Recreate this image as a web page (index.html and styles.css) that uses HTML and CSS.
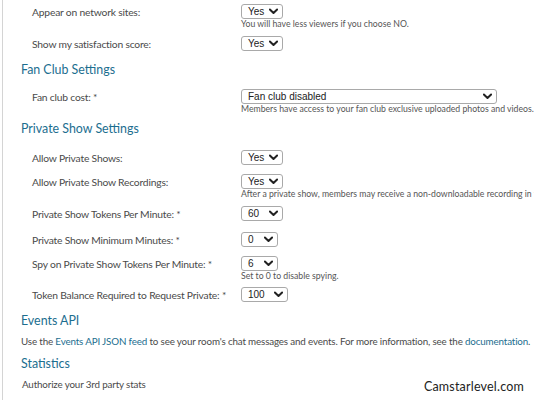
FILE: index.html
```html
<!DOCTYPE html>
<html>
<head>
<meta charset="utf-8">
<link rel="stylesheet" href="styles.css">
</head>
<body>
<div class="page">
  <div class="row r1">
    <div class="label">Appear on network sites:</div>
    <div class="ctl">
      <div class="sel w41"><span>Yes</span><svg class="chev" viewBox="0 0 10 7"><path d="M1 1.2 L5 5.2 L9 1.2"/></svg></div>
      <div class="help">You will have less viewers if you choose NO.</div>
    </div>
  </div>
  <div class="row r2">
    <div class="label">Show my satisfaction score:</div>
    <div class="ctl">
      <div class="sel w41"><span>Yes</span><svg class="chev" viewBox="0 0 10 7"><path d="M1 1.2 L5 5.2 L9 1.2"/></svg></div>
    </div>
  </div>

  <h2 class="h h-fan">Fan Club Settings</h2>
  <div class="row r-fan">
    <div class="label">Fan club cost: *</div>
    <div class="ctl">
      <div class="sel wide"><span>Fan club disabled</span><svg class="chev" viewBox="0 0 10 7"><path d="M1 1.2 L5 5.2 L9 1.2"/></svg></div>
      <div class="help">Members have access to your fan club exclusive uploaded photos and videos.</div>
    </div>
  </div>

  <h2 class="h h-priv">Private Show Settings</h2>
  <div class="row r-a">
    <div class="label">Allow Private Shows:</div>
    <div class="ctl">
      <div class="sel w41"><span>Yes</span><svg class="chev" viewBox="0 0 10 7"><path d="M1 1.2 L5 5.2 L9 1.2"/></svg></div>
    </div>
  </div>
  <div class="row r-b">
    <div class="label">Allow Private Show Recordings:</div>
    <div class="ctl">
      <div class="sel w41"><span>Yes</span><svg class="chev" viewBox="0 0 10 7"><path d="M1 1.2 L5 5.2 L9 1.2"/></svg></div>
      <div class="help">After a private show, members may receive a non-downloadable recording in their account.</div>
    </div>
  </div>
  <div class="row r-c">
    <div class="label">Private Show Tokens Per Minute: *</div>
    <div class="ctl">
      <div class="sel w41"><span>60</span><svg class="chev" viewBox="0 0 10 7"><path d="M1 1.2 L5 5.2 L9 1.2"/></svg></div>
    </div>
  </div>
  <div class="row r-d">
    <div class="label">Private Show Minimum Minutes: *</div>
    <div class="ctl">
      <div class="sel w36"><span>0</span><svg class="chev" viewBox="0 0 10 7"><path d="M1 1.2 L5 5.2 L9 1.2"/></svg></div>
    </div>
  </div>
  <div class="row r-e">
    <div class="label">Spy on Private Show Tokens Per Minute: *</div>
    <div class="ctl">
      <div class="sel w36"><span>6</span><svg class="chev" viewBox="0 0 10 7"><path d="M1 1.2 L5 5.2 L9 1.2"/></svg></div>
      <div class="help">Set to 0 to disable spying.</div>
    </div>
  </div>
  <div class="row r-f">
    <div class="label">Token Balance Required to Request Private: *</div>
    <div class="ctl">
      <div class="sel w46"><span>100</span><svg class="chev" viewBox="0 0 10 7"><path d="M1 1.2 L5 5.2 L9 1.2"/></svg></div>
    </div>
  </div>

  <h2 class="h h-events">Events API</h2>
  <p class="para">Use the <a href="#">Events API JSON feed</a> to see your room's chat messages and events. For more information, see the <a href="#">documentation</a>.</p>

  <h2 class="h h-stats">Statistics</h2>
  <p class="para para2">Authorize your 3rd party stats</p>

  <div class="brand">Camstarlevel.com</div>
</div>
</body>
</html>
```

FILE: styles.css
```css
html, body {
  margin: 0;
  padding: 0;
  background: #ffffff;
  overflow: hidden;
}
body {
  width: 534px;
  height: 400px;
  font-family: Lato, "Noto Sans", sans-serif;
  color: #4a4a4a;
}
.page {
  position: relative;
  display: flex;
  flex-direction: column;
  align-items: stretch;
  height: 400px;
  margin-left: 2px;
  border-left: 1px solid #d4d4d4;
  padding: 4px 0 0 18px;
  box-sizing: border-box;
  overflow: hidden;
}
.row {
  display: grid;
  grid-template-columns: 220px 1fr;
  margin-bottom: 9px;
}
.label {
  padding-left: 11px;
  padding-top: 1px;
  font-size: 10.3px;
  letter-spacing: -0.2px;
  line-height: 14px;
  color: #4a4a4a;
  white-space: nowrap;
}
.ctl {
  display: flex;
  flex-direction: column;
  align-items: flex-start;
  min-width: 0;
}
.sel {
  height: 15px;
  box-sizing: border-box;
  border: 1px solid #a9a9a9;
  border-radius: 3px;
  background: #fff;
  display: flex;
  align-items: center;
  justify-content: space-between;
  padding: 0 4px 0 6px;
  font-family: "Liberation Sans", Arial, sans-serif;
  font-size: 10px;
  color: #222;
}
.w41 { width: 42px; }
.w36 { width: 37px; }
.w46 { width: 47px; }
.wide { width: 256px; }
.chev {
  width: 9px;
  height: 7px;
  fill: none;
  stroke: #222;
  stroke-width: 2.2;
  stroke-linecap: round;
  stroke-linejoin: round;
}
.help {
  font-size: 8.7px;
  line-height: 10px;
  color: #555;
  white-space: nowrap;
}
.r1 { margin-bottom: 7px; }
.r-fan { margin-bottom: 0; }
.r-b { margin-bottom: 7px; }
.r-c { margin-bottom: 11px; }
.r-e { margin-bottom: 6px; }
.r-f { margin-bottom: 0; }
.h {
  margin: 0;
  font-size: 12.4px;
  line-height: 16px;
  font-weight: normal;
  color: #1c6e8f;
}
.h-fan { margin-top: 2px; margin-bottom: 11px; }
.h-priv { margin-top: 7px; margin-bottom: 13px; }
.h-events { margin-top: 11px; margin-bottom: 5px; }
.h-stats { margin-top: 8px; margin-bottom: 5px; }
.para {
  margin: 0;
  font-size: 9.8px;
  letter-spacing: -0.15px;
  line-height: 14px;
  white-space: nowrap;
  color: #4a4a4a;
}
.para2 { padding-left: 1px; }
.para a {
  color: #1c6e8f;
  text-decoration: none;
}
.brand {
  position: absolute;
  right: 10px;
  bottom: 6px;
  font-size: 12.5px;
  color: #222;
  letter-spacing: 0.2px;
}
```
